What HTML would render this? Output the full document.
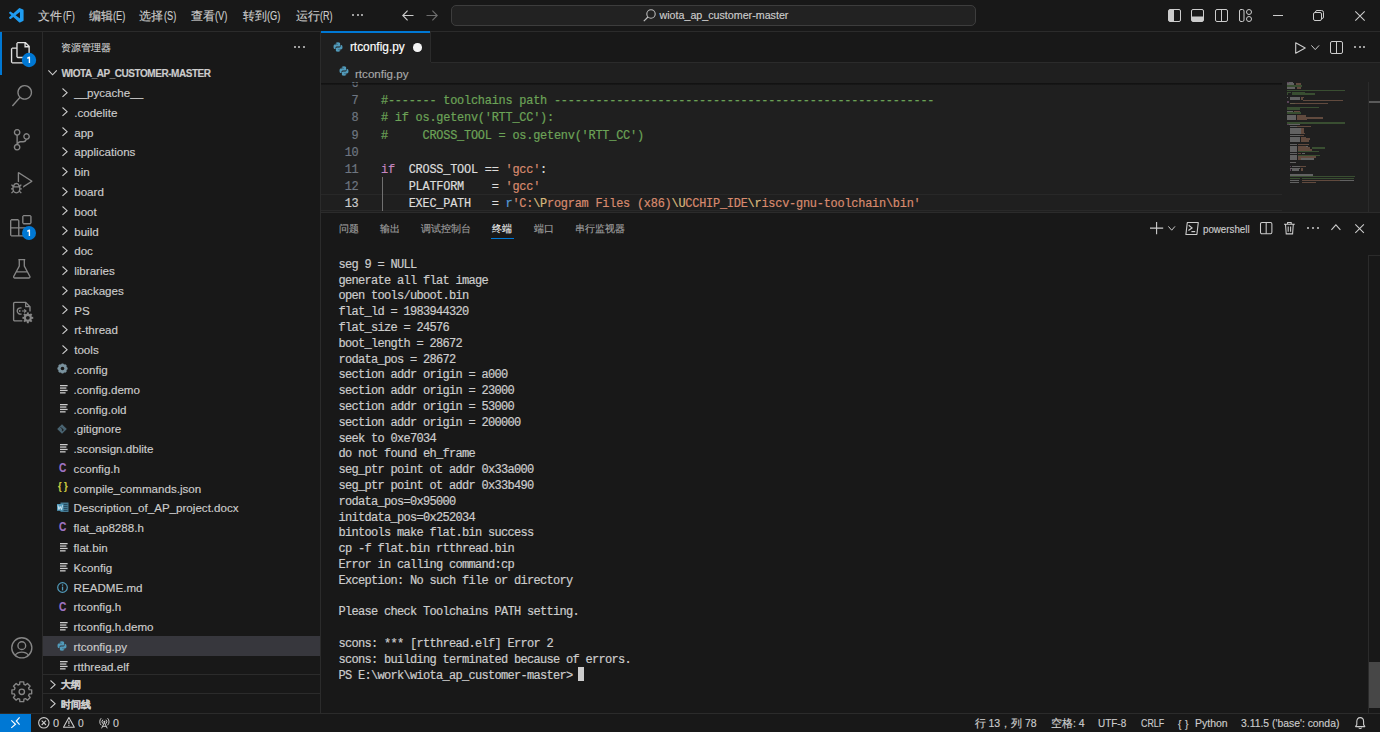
<!DOCTYPE html>
<html><head><meta charset="utf-8">
<style>
*{margin:0;padding:0;box-sizing:border-box}
html,body{width:1380px;height:732px;overflow:hidden;background:#181818;font-family:"Liberation Sans",sans-serif;color:#cccccc}
.a{position:absolute}
.tx{position:absolute;white-space:nowrap;-webkit-text-stroke:0.15px currentColor}
.mono{font-family:"Liberation Mono",monospace;-webkit-text-stroke:0.2px currentColor}
svg{overflow:visible}
</style></head><body>
<div class="a" style="left:0px;top:0px;width:1380px;height:31px;background:#181818;"></div><div class="a" style="left:0px;top:31px;width:1380px;height:1px;background:#2b2b2b;"></div><div class="a" style="left:0px;top:32px;width:42px;height:681px;background:#181818;"></div><div class="a" style="left:42px;top:32px;width:1px;height:681px;background:#2b2b2b;"></div><div class="a" style="left:43px;top:32px;width:277px;height:681px;background:#181818;"></div><div class="a" style="left:320px;top:32px;width:1px;height:681px;background:#2b2b2b;"></div><div class="a" style="left:321px;top:32px;width:1059px;height:30px;background:#181818;"></div><div class="a" style="left:321px;top:62px;width:1059px;height:150px;background:#1f1f1f;"></div><div class="a" style="left:321px;top:212px;width:1059px;height:1px;background:#2b2b2b;"></div><div class="a" style="left:321px;top:213px;width:1059px;height:500px;background:#181818;"></div><div class="a" style="left:0px;top:713px;width:1380px;height:19px;background:#181818;"></div><div class="a" style="left:0px;top:713px;width:1380px;height:1px;background:#2b2b2b;"></div><svg class="a" style="left:8.5px;top:7.8px;" width="14.6" height="14.6" viewBox="0 0 100 100"><path fill="#1f9cf0" d="M96.46 10.8L75.86.87a6.23 6.23 0 0 0-7.1 1.2L29.35 38.04 12.19 25.01a4.16 4.16 0 0 0-5.32.24l-5.5 5a4.17 4.17 0 0 0 0 6.16L16.25 50 1.37 63.58a4.17 4.17 0 0 0 0 6.16l5.5 5a4.16 4.16 0 0 0 5.32.24l17.160-13.03 39.41 35.96a6.22 6.22 0 0 0 7.1 1.2l20.6-9.92a6.25 6.25 0 0 0 3.54-5.63V16.43a6.25 6.25 0 0 0-3.54-5.63zM75.01 72.7L45.1 50l29.9-22.7v45.4z"/></svg><div class="tx" style="left:38.40px;top:10.44px;font-size:12px;line-height:12px;color:#cccccc;">文件</div><div class="tx" style="left:62.70px;top:9.70px;font-size:12.4px;line-height:12.4px;color:#cccccc;transform:scaleX(0.7389);transform-origin:0 0;">(F)</div><div class="tx" style="left:88.70px;top:10.44px;font-size:12px;line-height:12px;color:#cccccc;">编辑</div><div class="tx" style="left:113.00px;top:9.70px;font-size:12.4px;line-height:12.4px;color:#cccccc;transform:scaleX(0.7502);transform-origin:0 0;">(E)</div><div class="tx" style="left:139.40px;top:10.44px;font-size:12px;line-height:12px;color:#cccccc;">选择</div><div class="tx" style="left:163.70px;top:9.70px;font-size:12.4px;line-height:12.4px;color:#cccccc;transform:scaleX(0.7441);transform-origin:0 0;">(S)</div><div class="tx" style="left:191.00px;top:10.44px;font-size:12px;line-height:12px;color:#cccccc;">查看</div><div class="tx" style="left:215.30px;top:9.70px;font-size:12.4px;line-height:12.4px;color:#cccccc;transform:scaleX(0.7562);transform-origin:0 0;">(V)</div><div class="tx" style="left:243.00px;top:10.44px;font-size:12px;line-height:12px;color:#cccccc;">转到</div><div class="tx" style="left:267.30px;top:9.70px;font-size:12.4px;line-height:12.4px;color:#cccccc;transform:scaleX(0.7484);transform-origin:0 0;">(G)</div><div class="tx" style="left:296.00px;top:10.44px;font-size:12px;line-height:12px;color:#cccccc;">运行</div><div class="tx" style="left:320.30px;top:9.70px;font-size:12.4px;line-height:12.4px;color:#cccccc;transform:scaleX(0.7321);transform-origin:0 0;">(R)</div><div class="a" style="left:351.7px;top:13.6px;width:2px;height:2px;border-radius:1px;background:#cccccc"></div><div class="a" style="left:356.5px;top:13.6px;width:2px;height:2px;border-radius:1px;background:#cccccc"></div><div class="a" style="left:361.3px;top:13.6px;width:2px;height:2px;border-radius:1px;background:#cccccc"></div><svg class="a" style="left:402px;top:10px;" width="12" height="11" viewBox="0 0 12 11"><path d="M0.8 5.5H11.5M5.6 0.7L0.8 5.5L5.6 10.3" fill="none" stroke="#cccccc" stroke-width="1.1"/></svg><svg class="a" style="left:425.5px;top:10px;" width="12" height="11" viewBox="0 0 12 11"><path d="M11.2 5.5H0.5M6.4 0.7L11.2 5.5L6.4 10.3" fill="none" stroke="#6e6e6e" stroke-width="1.1"/></svg><div class="a" style="left:451px;top:5px;width:525px;height:21px;background:#222222;border:1px solid #3d3d3d;border-radius:5px"></div><svg class="a" style="left:643px;top:8.5px;" width="13" height="13" viewBox="0 0 13 13"><circle cx="8" cy="5" r="4.2" fill="none" stroke="#bdbdbd" stroke-width="1.1"/><path d="M5 8L0.8 12.2" stroke="#bdbdbd" stroke-width="1.2"/></svg><div class="tx" style="left:659.50px;top:10.14px;font-size:10.7px;line-height:10.7px;color:#cccccc;">wiota_ap_customer-master</div><svg class="a" style="left:1168px;top:9px;" width="13" height="13" viewBox="0 0 13 13"><rect x="0.5" y="0.5" width="12" height="12" rx="1.5" fill="none" stroke="#cccccc" stroke-width="1"/><rect x="1" y="1" width="4.5" height="11" fill="#cccccc"/><path d="M5.5 1V12" stroke="#cccccc"/></svg><svg class="a" style="left:1191px;top:9px;" width="13" height="13" viewBox="0 0 13 13"><rect x="0.5" y="0.5" width="12" height="12" rx="1.5" fill="none" stroke="#cccccc" stroke-width="1"/><rect x="1" y="8" width="11" height="4" fill="#cccccc"/><path d="M1 8H12" stroke="#cccccc"/></svg><svg class="a" style="left:1214.5px;top:9px;" width="13" height="13" viewBox="0 0 13 13"><rect x="0.5" y="0.5" width="12" height="12" rx="1.5" fill="none" stroke="#cccccc" stroke-width="1"/><path d="M6.5 1V12" stroke="#cccccc"/></svg><svg class="a" style="left:1238.5px;top:9px;" width="13" height="13" viewBox="0 0 13 13"><rect x="0.5" y="0.5" width="4.5" height="12" rx="1.5" fill="none" stroke="#cccccc" stroke-width="1"/><rect x="7.5" y="0.5" width="5" height="5" rx="2.5" fill="none" stroke="#cccccc"/><rect x="7.5" y="7.5" width="5" height="5" rx="2.5" fill="none" stroke="#cccccc"/></svg><div class="a" style="left:1272.5px;top:15px;width:10px;height:1px;background:#cccccc;"></div><svg class="a" style="left:1312.5px;top:10px;" width="11" height="11" viewBox="0 0 11 11"><rect x="0.5" y="2.5" width="8" height="8" rx="1.5" fill="none" stroke="#cccccc"/><path d="M2.5 2.5V2A1.5 1.5 0 0 1 4 0.5H8.5A2 2 0 0 1 10.5 2.5V7A1.5 1.5 0 0 1 9 8.5H8.5" fill="none" stroke="#cccccc"/></svg><svg class="a" style="left:1354.5px;top:10.5px;" width="10" height="10" viewBox="0 0 10 10"><path d="M0.3 0.3L9.7 9.7M9.7 0.3L0.3 9.7" stroke="#cccccc" stroke-width="1.05"/></svg><div class="a" style="left:0px;top:32px;width:2px;height:43px;background:#0078d4;"></div><svg class="a" style="left:10.2px;top:42.2px;" width="21.6" height="21.6" viewBox="0 0 24 24"><path fill="#e2e2e2" d="M17.5 0h-9L7 1.5V6H2.5L1 7.5v15.07L2.5 24h12.07L16 22.57V18h4.7l1.3-1.43V4.5L17.5 0zm0 2.12l2.38 2.38H17.5V2.12zm-3 20.38h-12v-15H7v9.07L8.5 18h6v4.5zm6-6h-12v-15H16V6h4.5v10.5z"/></svg><svg class="a" style="left:11.0px;top:85.2px;" width="21.6" height="21.6" viewBox="0 0 24 24"><path fill="#868686" d="M15.25 0a8.250 8.250 0 0 0-6.18 13.72L1 22.880l1.120 1 8.05-9.12A8.251 8.251 0 1 0 15.25.01V0zm0 15a6.75 6.75 0 1 1 0-13.5 6.75 6.75 0 0 1 0 13.5z"/></svg><svg class="a" style="left:10.6px;top:128.5px;" width="21.6" height="21.6" viewBox="0 0 24 24"><path fill="#868686" d="M21.007 8.222A3.738 3.738 0 0 0 15.045 5.2a3.737 3.737 0 0 0 1.156 6.583 2.988 2.988 0 0 1-2.668 1.67h-2.99a4.456 4.456 0 0 0-2.989 1.165V7.4a3.737 3.737 0 1 0-1.494 0v9.117a3.776 3.776 0 1 0 1.816.099 2.990 2.990 0 0 1 2.668-1.667h2.99a4.484 4.484 0 0 0 4.223-3.039 3.736 3.736 0 0 0 3.25-3.687zM4.565 3.738a2.242 2.242 0 1 1 4.484 0 2.242 2.242 0 0 1-4.484 0zm4.484 16.441a2.242 2.242 0 1 1-4.484 0 2.242 2.242 0 0 1 4.484 0zm8.221-9.715a2.242 2.242 0 1 1 0-4.485 2.242 2.242 0 0 1 0 4.485z"/></svg><svg class="a" style="left:10.8px;top:171.6px;" width="21.6" height="21.6" viewBox="0 0 24 24"><path fill="#868686" d="M10.94 13.5l-1.320 1.320a3.730 3.730 0 0 0-7.240 0L1.060 13.5 0 14.560l1.720 1.720-.220.220V18H0v1.5h1.5v.080c.077.489.214.966.410 1.420L0 22.940 1.060 24l1.650-1.650A4.308 4.308 0 0 0 6 24a4.310 4.310 0 0 0 3.290-1.650L10.940 24 12 22.940 10.090 21c.198-.464.336-.951.410-1.450v-.1H12V18h-1.5v-1.5l-.220-.220L12 14.560l-1.060-1.060zM6 13.5a2.250 2.250 0 0 1 2.250 2.250h-4.5A2.250 2.250 0 0 1 6 13.5zm3 6a3.330 3.330 0 0 1-3 3 3.330 3.330 0 0 1-3-3v-2.250h6v2.250zm14.760-9.9v1.260L13.5 17.370V15.6l8.5-5.370L9 2v9.460a5.070 5.070 0 0 0-1.5-.720V.630L8.640 0l15.120 9.6z"/></svg><svg class="a" style="left:10.3px;top:215.0px;" width="21.6" height="21.6" viewBox="0 0 24 24"><path fill="#868686" d="M13.5 1.5L15 0h7.5L24 1.5V9l-1.5 1.5H15L13.5 9V1.5zm1.5 0V9h7.5V1.5H15zM0 15V6l1.5-1.5H9L10.5 6v7.5H18l1.5 1.5v7.5L18 24H1.5L0 22.5V15zm9-1.5V6H1.5v7.5H9zM9 15H1.5v7.5H9V15zm1.5 7.5H18V15h-7.5v7.5z"/></svg><svg class="a" style="left:10.8px;top:258.0px;" width="21.6" height="21.6" viewBox="0 0 24 24"><path fill="none" stroke="#868686" stroke-width="1.5" d="M8.2 1.8H15.8M9.2 1.8V9L3 20.5Q2.6 22 4 22.2H20Q21.4 22 21 20.5L14.8 9V1.8M5.6 15.5H18.4"/></svg><svg class="a" style="left:11.5px;top:301.5px;" width="21.6" height="21.6" viewBox="0 0 24 24"><path fill="none" stroke="#868686" stroke-width="1.5" d="M11.5 21H3A1.2 1.2 0 0 1 1.8 19.8V1.6A1.2 1.2 0 0 1 3 0.4H15.2L20 5.2V10.5"/><path fill="none" stroke="#868686" stroke-width="1.4" d="M15.2 0.4V5.2H20"/><path fill="none" stroke="#868686" stroke-width="1.5" d="M10.6 6.9A3.4 3.4 0 1 0 10.6 13.1"/><circle cx="8.6" cy="10" r="1" fill="#868686"/><path d="M11 10H15.4M13.6 8.2L15.6 10L13.6 11.8" fill="none" stroke="#868686" stroke-width="1.3"/><circle cx="17.6" cy="17.6" r="3.3" fill="none" stroke="#868686" stroke-width="2.3"/><rect x="16.5" y="11.6" width="2.2" height="2.6" fill="#868686" transform="rotate(0 17.6 17.6)"/><rect x="16.5" y="11.6" width="2.2" height="2.6" fill="#868686" transform="rotate(45 17.6 17.6)"/><rect x="16.5" y="11.6" width="2.2" height="2.6" fill="#868686" transform="rotate(90 17.6 17.6)"/><rect x="16.5" y="11.6" width="2.2" height="2.6" fill="#868686" transform="rotate(135 17.6 17.6)"/><rect x="16.5" y="11.6" width="2.2" height="2.6" fill="#868686" transform="rotate(180 17.6 17.6)"/><rect x="16.5" y="11.6" width="2.2" height="2.6" fill="#868686" transform="rotate(225 17.6 17.6)"/><rect x="16.5" y="11.6" width="2.2" height="2.6" fill="#868686" transform="rotate(270 17.6 17.6)"/><rect x="16.5" y="11.6" width="2.2" height="2.6" fill="#868686" transform="rotate(315 17.6 17.6)"/></svg><svg class="a" style="left:10.6px;top:637.4px;" width="21.6" height="21.6" viewBox="0 0 24 24"><circle cx="12" cy="12" r="11.2" fill="none" stroke="#868686" stroke-width="1.5"/><circle cx="12" cy="9.6" r="4.3" fill="none" stroke="#868686" stroke-width="1.5"/><path d="M4.6 20.2A8.5 6.8 0 0 1 19.4 20.2" fill="none" stroke="#868686" stroke-width="1.5"/></svg><svg class="a" style="left:10.8px;top:681.0px;" width="21.6" height="21.6" viewBox="0 0 24 24"><path fill="none" stroke="#868686" stroke-width="1.5" stroke-linejoin="round" d="M20.27 9.63L22.99 9.86L22.99 14.14L20.27 14.37L19.52 16.17L21.29 18.26L18.26 21.29L16.17 19.52L14.37 20.27L14.14 22.99L9.86 22.99L9.63 20.27L7.83 19.52L5.74 21.29L2.71 18.26L4.48 16.17L3.73 14.37L1.01 14.14L1.01 9.86L3.73 9.63L4.48 7.83L2.71 5.74L5.74 2.71L7.83 4.48L9.63 3.73L9.86 1.01L14.14 1.01L14.37 3.73L16.17 4.48L18.26 2.71L21.29 5.74L19.52 7.83Z"/><circle cx="12" cy="12" r="3" fill="none" stroke="#868686" stroke-width="1.5"/></svg><svg class="a" style="left:21.0px;top:52.3px;" width="16" height="16" viewBox="0 0 16 16"><circle cx="8" cy="8" r="7.2" fill="#0078d4"/><path d="M6.3 6.4L8.4 5.1V11" fill="none" stroke="#ffffff" stroke-width="1.35" stroke-linejoin="round"/></svg><svg class="a" style="left:21.3px;top:224.6px;" width="16" height="16" viewBox="0 0 16 16"><circle cx="8" cy="8" r="7.0" fill="#0078d4"/><path d="M6.3 6.4L8.4 5.1V11" fill="none" stroke="#ffffff" stroke-width="1.35" stroke-linejoin="round"/></svg><div class="tx" style="left:61.20px;top:42.53px;font-size:10px;line-height:10px;color:#cccccc;">资源管理器</div><div class="a" style="left:293.6px;top:46.4px;width:2px;height:2px;border-radius:1px;background:#cccccc"></div><div class="a" style="left:298.1px;top:46.4px;width:2px;height:2px;border-radius:1px;background:#cccccc"></div><div class="a" style="left:302.8px;top:46.4px;width:2px;height:2px;border-radius:1px;background:#cccccc"></div><svg class="a" style="left:48px;top:70.4px;" width="9.2" height="5.4" viewBox="0 0 9.2 5.4"><path d="M0.4 0.4L4.6 4.8L8.8 0.4" fill="none" stroke="#cccccc" stroke-width="1.1"/></svg><div class="tx" style="left:61.40px;top:68.63px;font-size:10px;line-height:10px;color:#cccccc;font-weight:bold;letter-spacing:-0.46px;">WIOTA_AP_CUSTOMER-MASTER</div><div class="a" style="left:43px;top:636.04px;width:277px;height:19.78px;background:#37373d"></div><svg class="a" style="left:61.6px;top:87.7px;" width="5.8" height="9.3" viewBox="0 0 5.8 9.3"><path d="M0.5 0.5L5.1 4.65L0.5 8.8" fill="none" stroke="#cccccc" stroke-width="1.1"/></svg><div class="tx" style="left:74.20px;top:87.08px;font-size:11.6px;line-height:11.6px;color:#cccccc;">__pycache__</div><svg class="a" style="left:61.6px;top:107.48px;" width="5.8" height="9.3" viewBox="0 0 5.8 9.3"><path d="M0.5 0.5L5.1 4.65L0.5 8.8" fill="none" stroke="#cccccc" stroke-width="1.1"/></svg><div class="tx" style="left:74.20px;top:106.86px;font-size:11.6px;line-height:11.6px;color:#cccccc;">.codelite</div><svg class="a" style="left:61.6px;top:127.25999999999999px;" width="5.8" height="9.3" viewBox="0 0 5.8 9.3"><path d="M0.5 0.5L5.1 4.65L0.5 8.8" fill="none" stroke="#cccccc" stroke-width="1.1"/></svg><div class="tx" style="left:74.20px;top:126.64px;font-size:11.6px;line-height:11.6px;color:#cccccc;">app</div><svg class="a" style="left:61.6px;top:147.04px;" width="5.8" height="9.3" viewBox="0 0 5.8 9.3"><path d="M0.5 0.5L5.1 4.65L0.5 8.8" fill="none" stroke="#cccccc" stroke-width="1.1"/></svg><div class="tx" style="left:74.20px;top:146.42px;font-size:11.6px;line-height:11.6px;color:#cccccc;">applications</div><svg class="a" style="left:61.6px;top:166.82px;" width="5.8" height="9.3" viewBox="0 0 5.8 9.3"><path d="M0.5 0.5L5.1 4.65L0.5 8.8" fill="none" stroke="#cccccc" stroke-width="1.1"/></svg><div class="tx" style="left:74.20px;top:166.20px;font-size:11.6px;line-height:11.6px;color:#cccccc;">bin</div><svg class="a" style="left:61.6px;top:186.6px;" width="5.8" height="9.3" viewBox="0 0 5.8 9.3"><path d="M0.5 0.5L5.1 4.65L0.5 8.8" fill="none" stroke="#cccccc" stroke-width="1.1"/></svg><div class="tx" style="left:74.20px;top:185.98px;font-size:11.6px;line-height:11.6px;color:#cccccc;">board</div><svg class="a" style="left:61.6px;top:206.38px;" width="5.8" height="9.3" viewBox="0 0 5.8 9.3"><path d="M0.5 0.5L5.1 4.65L0.5 8.8" fill="none" stroke="#cccccc" stroke-width="1.1"/></svg><div class="tx" style="left:74.20px;top:205.76px;font-size:11.6px;line-height:11.6px;color:#cccccc;">boot</div><svg class="a" style="left:61.6px;top:226.16px;" width="5.8" height="9.3" viewBox="0 0 5.8 9.3"><path d="M0.5 0.5L5.1 4.65L0.5 8.8" fill="none" stroke="#cccccc" stroke-width="1.1"/></svg><div class="tx" style="left:74.20px;top:225.54px;font-size:11.6px;line-height:11.6px;color:#cccccc;">build</div><svg class="a" style="left:61.6px;top:245.94px;" width="5.8" height="9.3" viewBox="0 0 5.8 9.3"><path d="M0.5 0.5L5.1 4.65L0.5 8.8" fill="none" stroke="#cccccc" stroke-width="1.1"/></svg><div class="tx" style="left:74.20px;top:245.32px;font-size:11.6px;line-height:11.6px;color:#cccccc;">doc</div><svg class="a" style="left:61.6px;top:265.72px;" width="5.8" height="9.3" viewBox="0 0 5.8 9.3"><path d="M0.5 0.5L5.1 4.65L0.5 8.8" fill="none" stroke="#cccccc" stroke-width="1.1"/></svg><div class="tx" style="left:74.20px;top:265.10px;font-size:11.6px;line-height:11.6px;color:#cccccc;">libraries</div><svg class="a" style="left:61.6px;top:285.50000000000006px;" width="5.8" height="9.3" viewBox="0 0 5.8 9.3"><path d="M0.5 0.5L5.1 4.65L0.5 8.8" fill="none" stroke="#cccccc" stroke-width="1.1"/></svg><div class="tx" style="left:74.20px;top:284.88px;font-size:11.6px;line-height:11.6px;color:#cccccc;">packages</div><svg class="a" style="left:61.6px;top:305.28000000000003px;" width="5.8" height="9.3" viewBox="0 0 5.8 9.3"><path d="M0.5 0.5L5.1 4.65L0.5 8.8" fill="none" stroke="#cccccc" stroke-width="1.1"/></svg><div class="tx" style="left:74.20px;top:304.66px;font-size:11.6px;line-height:11.6px;color:#cccccc;">PS</div><svg class="a" style="left:61.6px;top:325.06px;" width="5.8" height="9.3" viewBox="0 0 5.8 9.3"><path d="M0.5 0.5L5.1 4.65L0.5 8.8" fill="none" stroke="#cccccc" stroke-width="1.1"/></svg><div class="tx" style="left:74.20px;top:324.44px;font-size:11.6px;line-height:11.6px;color:#cccccc;">rt-thread</div><svg class="a" style="left:61.6px;top:344.84px;" width="5.8" height="9.3" viewBox="0 0 5.8 9.3"><path d="M0.5 0.5L5.1 4.65L0.5 8.8" fill="none" stroke="#cccccc" stroke-width="1.1"/></svg><div class="tx" style="left:74.20px;top:344.22px;font-size:11.6px;line-height:11.6px;color:#cccccc;">tools</div><svg class="a" style="left:56.9px;top:363.02000000000004px;" width="11" height="11" viewBox="0 0 11 11"><circle cx="5.5" cy="5.5" r="3.4" fill="none" stroke="#7a929e" stroke-width="2.4"/><path d="M5.5 0.4V10.6M0.4 5.5H10.6M1.9 1.9L9.1 9.1M9.1 1.9L1.9 9.1" stroke="#7a929e" stroke-width="1.9"/><circle cx="5.5" cy="5.5" r="1.8" fill="#181818"/></svg><div class="tx" style="left:73.60px;top:364.00px;font-size:11.6px;line-height:11.6px;color:#cccccc;">.config</div><svg class="a" style="left:60.4px;top:384.5px;" width="8" height="8.6" viewBox="0 0 8 8.6"><rect x="0" y="0" width="7.6" height="1.3" fill="#cccccc"/><rect x="0" y="2.4" width="6.4" height="1.3" fill="#cccccc"/><rect x="0" y="4.8" width="7.6" height="1.3" fill="#cccccc"/><rect x="0" y="7.2" width="5.6" height="1.3" fill="#cccccc"/></svg><div class="tx" style="left:73.60px;top:383.78px;font-size:11.6px;line-height:11.6px;color:#cccccc;">.config.demo</div><svg class="a" style="left:60.4px;top:404.28px;" width="8" height="8.6" viewBox="0 0 8 8.6"><rect x="0" y="0" width="7.6" height="1.3" fill="#cccccc"/><rect x="0" y="2.4" width="6.4" height="1.3" fill="#cccccc"/><rect x="0" y="4.8" width="7.6" height="1.3" fill="#cccccc"/><rect x="0" y="7.2" width="5.6" height="1.3" fill="#cccccc"/></svg><div class="tx" style="left:73.60px;top:403.56px;font-size:11.6px;line-height:11.6px;color:#cccccc;">.config.old</div><svg class="a" style="left:57.1px;top:423.55999999999995px;" width="10" height="10" viewBox="0 0 10 10"><path d="M5 0.2L9.8 5L5 9.8L0.2 5Z" fill="#4a6472"/><path d="M3.6 3.2L5.4 5V7.2M5.4 5L6.8 6.2" stroke="#181818" stroke-width="0.9" fill="none"/></svg><div class="tx" style="left:73.60px;top:423.34px;font-size:11.6px;line-height:11.6px;color:#cccccc;">.gitignore</div><svg class="a" style="left:60.4px;top:443.84000000000003px;" width="8" height="8.6" viewBox="0 0 8 8.6"><rect x="0" y="0" width="7.6" height="1.3" fill="#cccccc"/><rect x="0" y="2.4" width="6.4" height="1.3" fill="#cccccc"/><rect x="0" y="4.8" width="7.6" height="1.3" fill="#cccccc"/><rect x="0" y="7.2" width="5.6" height="1.3" fill="#cccccc"/></svg><div class="tx" style="left:73.60px;top:443.12px;font-size:11.6px;line-height:11.6px;color:#cccccc;">.sconsign.dblite</div><div class="tx" style="left:59.00px;top:462.06px;font-size:12px;line-height:12px;color:#a074c4;font-weight:bold;transform:scaleX(0.8426);transform-origin:0 0;">C</div><div class="tx" style="left:73.60px;top:462.90px;font-size:11.6px;line-height:11.6px;color:#cccccc;">cconfig.h</div><div class="tx" style="left:57.80px;top:480.48px;font-size:11.6px;line-height:11.6px;color:#cbcb41;font-weight:bold;transform:scaleX(0.7978);transform-origin:0 0;">{</div><div class="tx" style="left:64.00px;top:480.48px;font-size:11.6px;line-height:11.6px;color:#cbcb41;font-weight:bold;transform:scaleX(0.7978);transform-origin:0 0;">}</div><div class="tx" style="left:73.60px;top:482.68px;font-size:11.6px;line-height:11.6px;color:#cccccc;">compile_commands.json</div><svg class="a" style="left:56.5px;top:502.17999999999995px;" width="12" height="10.5" viewBox="0 0 12 10.5"><rect x="3.5" y="0.5" width="8" height="9.5" fill="#519aba" opacity="0.75"/><path d="M5.2 2.5H10.5M5.2 4.5H10.5M5.2 6.5H10.5M5.2 8.5H10.5" stroke="#1f3f55" stroke-width="0.8"/><rect x="0" y="2" width="6.5" height="6.8" fill="#519aba"/><path d="M1 3.3L1.9 7.5L3.2 4.5L4.5 7.5L5.5 3.3" stroke="#e8f4fb" stroke-width="0.8" fill="none"/></svg><div class="tx" style="left:73.60px;top:502.46px;font-size:11.6px;line-height:11.6px;color:#cccccc;">Description_of_AP_project.docx</div><div class="tx" style="left:59.00px;top:521.40px;font-size:12px;line-height:12px;color:#a074c4;font-weight:bold;transform:scaleX(0.8426);transform-origin:0 0;">C</div><div class="tx" style="left:73.60px;top:522.24px;font-size:11.6px;line-height:11.6px;color:#cccccc;">flat_ap8288.h</div><svg class="a" style="left:60.4px;top:542.7400000000001px;" width="8" height="8.6" viewBox="0 0 8 8.6"><rect x="0" y="0" width="7.6" height="1.3" fill="#cccccc"/><rect x="0" y="2.4" width="6.4" height="1.3" fill="#cccccc"/><rect x="0" y="4.8" width="7.6" height="1.3" fill="#cccccc"/><rect x="0" y="7.2" width="5.6" height="1.3" fill="#cccccc"/></svg><div class="tx" style="left:73.60px;top:542.02px;font-size:11.6px;line-height:11.6px;color:#cccccc;">flat.bin</div><svg class="a" style="left:60.4px;top:562.5200000000001px;" width="8" height="8.6" viewBox="0 0 8 8.6"><rect x="0" y="0" width="7.6" height="1.3" fill="#cccccc"/><rect x="0" y="2.4" width="6.4" height="1.3" fill="#cccccc"/><rect x="0" y="4.8" width="7.6" height="1.3" fill="#cccccc"/><rect x="0" y="7.2" width="5.6" height="1.3" fill="#cccccc"/></svg><div class="tx" style="left:73.60px;top:561.80px;font-size:11.6px;line-height:11.6px;color:#cccccc;">Kconfig</div><svg class="a" style="left:57.0px;top:581.6px;" width="11" height="11" viewBox="0 0 11 11"><circle cx="5.5" cy="5.5" r="4.8" fill="none" stroke="#519aba" stroke-width="1.2"/><rect x="4.9" y="4.6" width="1.3" height="3.8" fill="#519aba"/><rect x="4.9" y="2.4" width="1.3" height="1.3" fill="#519aba"/></svg><div class="tx" style="left:73.60px;top:581.58px;font-size:11.6px;line-height:11.6px;color:#cccccc;">README.md</div><div class="tx" style="left:59.00px;top:600.52px;font-size:12px;line-height:12px;color:#a074c4;font-weight:bold;transform:scaleX(0.8426);transform-origin:0 0;">C</div><div class="tx" style="left:73.60px;top:601.36px;font-size:11.6px;line-height:11.6px;color:#cccccc;">rtconfig.h</div><svg class="a" style="left:60.4px;top:621.8600000000001px;" width="8" height="8.6" viewBox="0 0 8 8.6"><rect x="0" y="0" width="7.6" height="1.3" fill="#cccccc"/><rect x="0" y="2.4" width="6.4" height="1.3" fill="#cccccc"/><rect x="0" y="4.8" width="7.6" height="1.3" fill="#cccccc"/><rect x="0" y="7.2" width="5.6" height="1.3" fill="#cccccc"/></svg><div class="tx" style="left:73.60px;top:621.14px;font-size:11.6px;line-height:11.6px;color:#cccccc;">rtconfig.h.demo</div><svg class="a" style="left:57.2px;top:640.94px;" width="10" height="10" viewBox="0 0 16 16"><path fill="#519aba" d="M7.9 0.3C4.3 0.3 4.5 1.9 4.5 1.9V3.6H8V4.1H3.1S0.8 3.8 0.8 7.5 2.8 11 2.8 11H4V9.3S3.9 7.3 6 7.3H9.5S11.4 7.3 11.4 5.5V2.4S11.7 0.3 7.9 0.3ZM6 1.4A.6.6 0 1 1 6 2.6 .6.6 0 1 1 6 1.4Z"/><path fill="#519aba" d="M8.1 15.7C11.7 15.7 11.5 14.1 11.5 14.1V12.4H8V11.9H12.9S15.2 12.2 15.2 8.5 13.2 5 13.2 5H12V6.7S12.1 8.7 10 8.7H6.5S4.6 8.7 4.6 10.5V13.6S4.3 15.7 8.1 15.7ZM10 14.6A.6.6 0 1 1 10 13.4 .6.6 0 1 1 10 14.6Z"/></svg><div class="tx" style="left:73.60px;top:640.92px;font-size:11.6px;line-height:11.6px;color:#cccccc;">rtconfig.py</div><svg class="a" style="left:60.4px;top:661.4200000000001px;" width="8" height="8.6" viewBox="0 0 8 8.6"><rect x="0" y="0" width="7.6" height="1.3" fill="#cccccc"/><rect x="0" y="2.4" width="6.4" height="1.3" fill="#cccccc"/><rect x="0" y="4.8" width="7.6" height="1.3" fill="#cccccc"/><rect x="0" y="7.2" width="5.6" height="1.3" fill="#cccccc"/></svg><div class="tx" style="left:73.60px;top:660.70px;font-size:11.6px;line-height:11.6px;color:#cccccc;">rtthread.elf</div><div class="a" style="left:43px;top:674px;width:277px;height:1px;background:#2b2b2b;"></div><div class="a" style="left:43px;top:693px;width:277px;height:1px;background:#2b2b2b;"></div><svg class="a" style="left:49.6px;top:679.6px;" width="5.8" height="9.3" viewBox="0 0 5.8 9.3"><path d="M0.5 0.5L5.1 4.65L0.5 8.8" fill="none" stroke="#cccccc" stroke-width="1.1"/></svg><div class="tx" style="left:61.00px;top:680.03px;font-size:10px;line-height:10px;color:#cccccc;font-weight:bold;">大纲</div><svg class="a" style="left:49.6px;top:699.0px;" width="5.8" height="9.3" viewBox="0 0 5.8 9.3"><path d="M0.5 0.5L5.1 4.65L0.5 8.8" fill="none" stroke="#cccccc" stroke-width="1.1"/></svg><div class="tx" style="left:61.00px;top:699.53px;font-size:10px;line-height:10px;color:#cccccc;font-weight:bold;">时间线</div><div class="a" style="left:321px;top:32px;width:109px;height:30px;background:#1f1f1f;"></div><div class="a" style="left:321px;top:31px;width:109px;height:2px;background:#0078d4;"></div><div class="a" style="left:430px;top:32px;width:1px;height:30px;background:#2b2b2b;"></div><div class="a" style="left:431px;top:62px;width:949px;height:1px;background:#2b2b2b;"></div><svg class="a" style="left:333.4px;top:41.9px;" width="10" height="10" viewBox="0 0 16 16"><path fill="#519aba" d="M7.9 0.3C4.3 0.3 4.5 1.9 4.5 1.9V3.6H8V4.1H3.1S0.8 3.8 0.8 7.5 2.8 11 2.8 11H4V9.3S3.9 7.3 6 7.3H9.5S11.4 7.3 11.4 5.5V2.4S11.7 0.3 7.9 0.3ZM6 1.4A.6.6 0 1 1 6 2.6 .6.6 0 1 1 6 1.4Z"/><path fill="#519aba" d="M8.1 15.7C11.7 15.7 11.5 14.1 11.5 14.1V12.4H8V11.9H12.9S15.2 12.2 15.2 8.5 13.2 5 13.2 5H12V6.7S12.1 8.7 10 8.7H6.5S4.6 8.7 4.6 10.5V13.6S4.3 15.7 8.1 15.7ZM10 14.6A.6.6 0 1 1 10 13.4 .6.6 0 1 1 10 14.6Z"/></svg><div class="tx" style="left:349.90px;top:41.93px;font-size:11.9px;line-height:11.9px;color:#ffffff;">rtconfig.py</div><div class="a" style="left:413.0px;top:43.0px;width:8.6px;height:8.6px;border-radius:50%;background:#f4f4f4"></div><svg class="a" style="left:1295.3px;top:41.9px;" width="11" height="12" viewBox="0 0 11 12"><path d="M0.7 0.8L10.2 6L0.7 11.2Z" fill="none" stroke="#cccccc" stroke-width="1.1" stroke-linejoin="round"/></svg><svg class="a" style="left:1311.3px;top:44.9px;" width="8.5" height="5.5" viewBox="0 0 8.5 5.5"><path d="M0.4 0.4L4.25 4.6L8.1 0.4" fill="none" stroke="#cccccc" stroke-width="1"/></svg><svg class="a" style="left:1330px;top:40.8px;" width="13" height="13" viewBox="0 0 13 13"><rect x="0.5" y="0.5" width="12" height="12" rx="1.5" fill="none" stroke="#cccccc"/><path d="M6.5 1V12" stroke="#cccccc"/></svg><div class="a" style="left:1354.0px;top:46.4px;width:2px;height:2px;border-radius:1px;background:#cccccc"></div><div class="a" style="left:1358.5px;top:46.4px;width:2px;height:2px;border-radius:1px;background:#cccccc"></div><div class="a" style="left:1363.0px;top:46.4px;width:2px;height:2px;border-radius:1px;background:#cccccc"></div><svg class="a" style="left:338.8px;top:66.2px;" width="10" height="10" viewBox="0 0 16 16"><path fill="#519aba" d="M7.9 0.3C4.3 0.3 4.5 1.9 4.5 1.9V3.6H8V4.1H3.1S0.8 3.8 0.8 7.5 2.8 11 2.8 11H4V9.3S3.9 7.3 6 7.3H9.5S11.4 7.3 11.4 5.5V2.4S11.7 0.3 7.9 0.3ZM6 1.4A.6.6 0 1 1 6 2.6 .6.6 0 1 1 6 1.4Z"/><path fill="#519aba" d="M8.1 15.7C11.7 15.7 11.5 14.1 11.5 14.1V12.4H8V11.9H12.9S15.2 12.2 15.2 8.5 13.2 5 13.2 5H12V6.7S12.1 8.7 10 8.7H6.5S4.6 8.7 4.6 10.5V13.6S4.3 15.7 8.1 15.7ZM10 14.6A.6.6 0 1 1 10 13.4 .6.6 0 1 1 10 14.6Z"/></svg><div class="tx" style="left:355.00px;top:68.18px;font-size:11.6px;line-height:11.6px;color:#a9a9a9;">rtconfig.py</div><div class="a" style="left:321px;top:194px;width:961px;height:1px;background:#282828;"></div><div class="a" style="left:321px;top:210px;width:961px;height:1px;background:#282828;"></div><div class="a" style="left:0;top:82px;width:1380px;height:130px;overflow:hidden"><div class="a" style="left:0;top:-82px;width:1380px;height:300px"><div class="tx mono" style="left:351.58px;top:79.31px;font-size:11.9px;line-height:11.9px;color:#6e7681;letter-spacing:-0.220px;">6</div><div class="tx mono" style="left:351.58px;top:96.38px;font-size:11.9px;line-height:11.9px;color:#6e7681;letter-spacing:-0.220px;">7</div><div class="tx mono" style="left:351.58px;top:113.45px;font-size:11.9px;line-height:11.9px;color:#6e7681;letter-spacing:-0.220px;">8</div><div class="tx mono" style="left:351.58px;top:130.52px;font-size:11.9px;line-height:11.9px;color:#6e7681;letter-spacing:-0.220px;">9</div><div class="tx mono" style="left:344.66px;top:147.59px;font-size:11.9px;line-height:11.9px;color:#6e7681;letter-spacing:-0.220px;">10</div><div class="tx mono" style="left:344.66px;top:164.66px;font-size:11.9px;line-height:11.9px;color:#6e7681;letter-spacing:-0.220px;">11</div><div class="tx mono" style="left:344.66px;top:181.73px;font-size:11.9px;line-height:11.9px;color:#6e7681;letter-spacing:-0.220px;">12</div><div class="tx mono" style="left:344.66px;top:198.80px;font-size:11.9px;line-height:11.9px;color:#cccccc;letter-spacing:-0.220px;">13</div><div class="a" style="left:381.5px;top:176.95px;width:1px;height:34.14px;background:#707070;"></div><div class="tx mono" style="left:381.0px;top:96.38px;font-size:11.9px;line-height:11.9px;letter-spacing:-0.220px;white-space:pre"><span style="color:#6ca357">#------- toolchains path -------------------------------------------------------</span></div><div class="tx mono" style="left:381.0px;top:113.45px;font-size:11.9px;line-height:11.9px;letter-spacing:-0.220px;white-space:pre"><span style="color:#6ca357"># if os.getenv('RTT_CC'):</span></div><div class="tx mono" style="left:381.0px;top:130.52px;font-size:11.9px;line-height:11.9px;letter-spacing:-0.220px;white-space:pre"><span style="color:#6ca357">#     CROSS_TOOL = os.getenv('RTT_CC')</span></div><div class="tx mono" style="left:381.0px;top:164.66px;font-size:11.9px;line-height:11.9px;letter-spacing:-0.220px;white-space:pre"><span style="color:#c586c0">if</span><span style="color:#dcdcdc">  CROSS_TOOL == </span><span style="color:#d88a6e">'gcc'</span><span style="color:#dcdcdc">:</span></div><div class="tx mono" style="left:381.0px;top:181.73px;font-size:11.9px;line-height:11.9px;letter-spacing:-0.220px;white-space:pre"><span style="color:#dcdcdc">    PLATFORM    = </span><span style="color:#d88a6e">'gcc'</span></div><div class="tx mono" style="left:381.0px;top:198.80px;font-size:11.9px;line-height:11.9px;letter-spacing:-0.220px;white-space:pre"><span style="color:#dcdcdc">    EXEC_PATH   = </span><span style="color:#569cd6">r</span><span style="color:#d88a6e">'C:</span><span style="color:#d7ba7d">\P</span><span style="color:#d88a6e">rogram Files (x86)</span><span style="color:#d7ba7d">\U</span><span style="color:#d88a6e">CCHIP_IDE</span><span style="color:#d7ba7d">\r</span><span style="color:#d88a6e">iscv-gnu-toolchain\bin'</span></div></div></div><div class="a" style="left:321px;top:83px;width:961px;height:2px;background:linear-gradient(#101010,rgba(0,0,0,0.2))"></div><div class="a" style="left:1368px;top:82px;width:1px;height:130px;background:#2b2b2b;"></div><div class="a" style="left:1369px;top:101px;width:11px;height:2px;background:#5a5a5a;"></div><div class="a" style="left:0;top:0;opacity:0.62"><div class="a" style="left:1287px;top:81.6px;width:2.0px;height:1.4px;background:#7e5a7c"></div><div class="a" style="left:1289px;top:81.6px;width:4.0px;height:1.4px;background:#8c8c8c"></div><div class="a" style="left:1287px;top:83.4px;width:7.0px;height:1.4px;background:#8c8c8c"></div><div class="a" style="left:1296px;top:83.4px;width:5.0px;height:1.4px;background:#8a6552"></div><div class="a" style="left:1287px;top:85.4px;width:14.5px;height:1.4px;background:#4a6b3c"></div><div class="a" style="left:1287px;top:87.4px;width:7.5px;height:1.4px;background:#8c8c8c"></div><div class="a" style="left:1297px;top:87.4px;width:3.5px;height:1.4px;background:#8a6552"></div><div class="a" style="left:1287px;top:90.0px;width:17.5px;height:1.4px;background:#4a6b3c"></div><div class="a" style="left:1305.4px;top:90.0px;width:39.4px;height:1.4px;background:#4a6b3c"></div><div class="a" style="left:1287px;top:91.8px;width:4.0px;height:1.4px;background:#4a6b3c"></div><div class="a" style="left:1292px;top:91.8px;width:12.5px;height:1.4px;background:#4a6b3c"></div><div class="a" style="left:1287px;top:93.4px;width:1.0px;height:1.4px;background:#4a6b3c"></div><div class="a" style="left:1291.9px;top:93.4px;width:22.8px;height:1.4px;background:#4a6b3c"></div><div class="a" style="left:1287px;top:96.6px;width:1.0px;height:1.4px;background:#8c8c8c"></div><div class="a" style="left:1289.5px;top:96.6px;width:10.5px;height:1.4px;background:#8c8c8c"></div><div class="a" style="left:1300.7px;top:96.6px;width:3.8px;height:1.4px;background:#8a6552"></div><div class="a" style="left:1289.7px;top:98.4px;width:10.3px;height:1.4px;background:#8c8c8c"></div><div class="a" style="left:1300.5px;top:98.4px;width:2.5px;height:1.4px;background:#8a6552"></div><div class="a" style="left:1302.9px;top:99.8px;width:40.1px;height:1.4px;background:#8a6552"></div><div class="a" style="left:1287px;top:101.4px;width:2.3px;height:1.4px;background:#7e5a7c"></div><div class="a" style="left:1289.7px;top:103.0px;width:5.3px;height:1.4px;background:#8f8060"></div><div class="a" style="left:1295.2px;top:103.0px;width:33.0px;height:1.4px;background:#8a6552"></div><div class="a" style="left:1287px;top:106.8px;width:31.5px;height:1.4px;background:#4a6b3c"></div><div class="a" style="left:1287px;top:108.4px;width:13.0px;height:1.4px;background:#4a6b3c"></div><div class="a" style="left:1287px;top:110.8px;width:5.7px;height:1.4px;background:#8c8c8c"></div><div class="a" style="left:1293.5px;top:110.8px;width:6.8px;height:1.4px;background:#8a6552"></div><div class="a" style="left:1287px;top:112.4px;width:13.7px;height:1.4px;background:#4a6b3c"></div><div class="a" style="left:1287px;top:115.4px;width:8.7px;height:1.4px;background:#8c8c8c"></div><div class="a" style="left:1296.5px;top:115.4px;width:9.5px;height:1.4px;background:#8a6552"></div><div class="a" style="left:1287px;top:117.2px;width:9.0px;height:1.4px;background:#8c8c8c"></div><div class="a" style="left:1297px;top:117.2px;width:26.0px;height:1.4px;background:#8a6552"></div><div class="a" style="left:1287px;top:119.0px;width:9.0px;height:1.4px;background:#8c8c8c"></div><div class="a" style="left:1297px;top:119.0px;width:9.5px;height:1.4px;background:#8a6552"></div><div class="a" style="left:1287px;top:122.4px;width:15.0px;height:1.4px;background:#4a6b3c"></div><div class="a" style="left:1302px;top:122.4px;width:42.8px;height:1.4px;background:#4a6b3c"></div><div class="a" style="left:1287px;top:124.0px;width:1.5px;height:1.4px;background:#7e5a7c"></div><div class="a" style="left:1288.5px;top:124.0px;width:11.5px;height:1.4px;background:#8c8c8c"></div><div class="a" style="left:1289.7px;top:125.8px;width:7.3px;height:1.4px;background:#8c8c8c"></div><div class="a" style="left:1297px;top:125.8px;width:14.0px;height:1.4px;background:#8a6552"></div><div class="a" style="left:1289.7px;top:127.6px;width:11.3px;height:1.4px;background:#8c8c8c"></div><div class="a" style="left:1301px;top:127.6px;width:2.7px;height:1.4px;background:#8a6552"></div><div class="a" style="left:1289.7px;top:129.4px;width:11.3px;height:1.4px;background:#8c8c8c"></div><div class="a" style="left:1301px;top:129.4px;width:2.7px;height:1.4px;background:#8a6552"></div><div class="a" style="left:1289.7px;top:131.2px;width:11.3px;height:1.4px;background:#8c8c8c"></div><div class="a" style="left:1301px;top:131.2px;width:2.7px;height:1.4px;background:#8a6552"></div><div class="a" style="left:1289.7px;top:133.0px;width:11.3px;height:1.4px;background:#8c8c8c"></div><div class="a" style="left:1301px;top:133.0px;width:4.0px;height:1.4px;background:#8a6552"></div><div class="a" style="left:1290.4px;top:134.8px;width:9.3px;height:1.4px;background:#8c8c8c"></div><div class="a" style="left:1299.7px;top:134.8px;width:4.3px;height:1.4px;background:#8a6552"></div><div class="a" style="left:1290.4px;top:136.6px;width:9.3px;height:1.4px;background:#8c8c8c"></div><div class="a" style="left:1300.5px;top:136.6px;width:5.5px;height:1.4px;background:#8a6552"></div><div class="a" style="left:1290.4px;top:138.4px;width:9.3px;height:1.4px;background:#8c8c8c"></div><div class="a" style="left:1300.5px;top:138.4px;width:9.5px;height:1.4px;background:#8a6552"></div><div class="a" style="left:1290.4px;top:140.2px;width:9.3px;height:1.4px;background:#8c8c8c"></div><div class="a" style="left:1300.5px;top:140.2px;width:8.5px;height:1.4px;background:#8a6552"></div><div class="a" style="left:1290.4px;top:143.8px;width:7.1px;height:1.4px;background:#8c8c8c"></div><div class="a" style="left:1298px;top:143.8px;width:11.0px;height:1.4px;background:#8a6552"></div><div class="a" style="left:1290.4px;top:145.6px;width:7.1px;height:1.4px;background:#8c8c8c"></div><div class="a" style="left:1298px;top:145.6px;width:8.0px;height:1.4px;background:#8a6552"></div><div class="a" style="left:1306px;top:145.6px;width:2.0px;height:1.4px;background:#8c8c8c"></div><div class="a" style="left:1290.4px;top:147.4px;width:7.1px;height:1.4px;background:#8c8c8c"></div><div class="a" style="left:1298px;top:147.4px;width:12.0px;height:1.4px;background:#8a6552"></div><div class="a" style="left:1312px;top:147.4px;width:12.8px;height:1.4px;background:#4a6b3c"></div><div class="a" style="left:1290.4px;top:149.2px;width:7.1px;height:1.4px;background:#8c8c8c"></div><div class="a" style="left:1298px;top:149.2px;width:14.0px;height:1.4px;background:#8a6552"></div><div class="a" style="left:1290.4px;top:151.0px;width:7.1px;height:1.4px;background:#8c8c8c"></div><div class="a" style="left:1298px;top:151.0px;width:21.0px;height:1.4px;background:#4a6b3c"></div><div class="a" style="left:1290.4px;top:152.8px;width:7.1px;height:1.4px;background:#8c8c8c"></div><div class="a" style="left:1298px;top:152.8px;width:3.0px;height:1.4px;background:#8a6552"></div><div class="a" style="left:1302px;top:152.8px;width:3.0px;height:1.4px;background:#8c8c8c"></div><div class="a" style="left:1290.4px;top:154.6px;width:7.1px;height:1.4px;background:#8c8c8c"></div><div class="a" style="left:1298px;top:154.6px;width:22.0px;height:1.4px;background:#4a6b3c"></div><div class="a" style="left:1290.4px;top:156.4px;width:7.1px;height:1.4px;background:#8c8c8c"></div><div class="a" style="left:1298px;top:156.4px;width:18.0px;height:1.4px;background:#8a6552"></div><div class="a" style="left:1290.4px;top:158.2px;width:7.1px;height:1.4px;background:#8c8c8c"></div><div class="a" style="left:1298px;top:158.2px;width:2.5px;height:1.4px;background:#8a6552"></div><div class="a" style="left:1301px;top:158.2px;width:13.0px;height:1.4px;background:#8c8c8c"></div><div class="a" style="left:1290.4px;top:161.6px;width:6.0px;height:1.4px;background:#8c8c8c"></div><div class="a" style="left:1290.4px;top:165.8px;width:1.1px;height:1.4px;background:#7e5a7c"></div><div class="a" style="left:1291.5px;top:165.8px;width:8.2px;height:1.4px;background:#8c8c8c"></div><div class="a" style="left:1299.7px;top:165.8px;width:6.0px;height:1.4px;background:#8a6552"></div><div class="a" style="left:1290.4px;top:167.6px;width:9.3px;height:1.4px;background:#8c8c8c"></div><div class="a" style="left:1300.7px;top:167.6px;width:2.3px;height:1.4px;background:#8a6552"></div><div class="a" style="left:1290.4px;top:169.4px;width:1.1px;height:1.4px;background:#7e5a7c"></div><div class="a" style="left:1291.5px;top:169.4px;width:7.5px;height:1.4px;background:#8c8c8c"></div><div class="a" style="left:1300.7px;top:169.4px;width:2.3px;height:1.4px;background:#8a6552"></div><div class="a" style="left:1290.4px;top:174.2px;width:22.4px;height:1.4px;background:#8c8c8c"></div><div class="a" style="left:1290.4px;top:176.0px;width:65.0px;height:1.4px;background:#4a6b3c"></div><div class="a" style="left:1290.4px;top:177.8px;width:9.6px;height:1.4px;background:#4a6b3c"></div><div class="a" style="left:1302px;top:177.8px;width:52.0px;height:1.4px;background:#4a6b3c"></div><div class="a" style="left:1290.4px;top:179.6px;width:8.2px;height:1.4px;background:#8c8c8c"></div><div class="a" style="left:1302px;top:179.6px;width:38.0px;height:1.4px;background:#8a6552"></div><div class="a" style="left:1340px;top:179.6px;width:14.3px;height:1.4px;background:#8c8c8c"></div><div class="a" style="left:1290.4px;top:181.8px;width:8.2px;height:1.4px;background:#8c8c8c"></div><div class="a" style="left:1302px;top:181.8px;width:14.0px;height:1.4px;background:#8a6552"></div></div><div class="tx" style="left:338.50px;top:223.94px;font-size:10px;line-height:10px;color:#9d9d9d;">问题</div><div class="tx" style="left:380.00px;top:223.94px;font-size:10px;line-height:10px;color:#9d9d9d;">输出</div><div class="tx" style="left:421.40px;top:223.94px;font-size:10px;line-height:10px;color:#9d9d9d;">调试控制台</div><div class="tx" style="left:492.00px;top:223.94px;font-size:10px;line-height:10px;color:#e7e7e7;">终端</div><div class="tx" style="left:533.60px;top:223.94px;font-size:10px;line-height:10px;color:#9d9d9d;">端口</div><div class="tx" style="left:575.00px;top:223.94px;font-size:10px;line-height:10px;color:#9d9d9d;">串行监视器</div><div class="a" style="left:491px;top:238px;width:23px;height:1px;background:#0078d4;"></div><svg class="a" style="left:1149.7px;top:222.2px;" width="13.2" height="12.2" viewBox="0 0 13.2 12.2"><path d="M6.6 0V12.2M0 6.1H13.2" stroke="#cccccc" stroke-width="1.1"/></svg><svg class="a" style="left:1168px;top:226.3px;" width="7.4" height="4.8" viewBox="0 0 7.4 4.8"><path d="M0.4 0.4L3.7 4.2L7 0.4" fill="none" stroke="#cccccc" stroke-width="1"/></svg><svg class="a" style="left:1184.8px;top:222.2px;" width="14.4" height="13" viewBox="0 0 14.4 13"><path d="M2.3 0.5H13.3L11.9 12.5H0.9Z" fill="none" stroke="#cccccc" stroke-width="1.1" stroke-linejoin="round"/><path d="M3.7 3.2L7 5.9L3.4 8.4" fill="none" stroke="#cccccc" stroke-width="1.2"/><path d="M6.4 9.6H10.2" stroke="#cccccc" stroke-width="1.2"/></svg><div class="tx" style="left:1203.00px;top:224.60px;font-size:10.4px;line-height:10.4px;color:#cccccc;transform:scaleX(0.9374);transform-origin:0 0;">powershell</div><svg class="a" style="left:1260.2px;top:222.4px;" width="12.4" height="12.2" viewBox="0 0 12.4 12.2"><rect x="0.5" y="0.5" width="11.4" height="11.2" rx="1.4" fill="none" stroke="#cccccc" stroke-width="1.05"/><path d="M6.2 1V11.7" stroke="#cccccc" stroke-width="1.05"/></svg><svg class="a" style="left:1283.6px;top:222.2px;" width="10.8" height="12.4" viewBox="0 0 10.8 12.4"><path d="M0 2.3H10.8M3.6 2.3V0.6H7.2V2.3M1.5 2.3L2.2 11.9H8.6L9.3 2.3M4.2 4.5V9.8M6.6 4.5V9.8" fill="none" stroke="#cccccc" stroke-width="1.05"/></svg><div class="a" style="left:1307.0px;top:227.3px;width:2px;height:2px;border-radius:1px;background:#cccccc"></div><div class="a" style="left:1311.8px;top:227.3px;width:2px;height:2px;border-radius:1px;background:#cccccc"></div><div class="a" style="left:1316.6px;top:227.3px;width:2px;height:2px;border-radius:1px;background:#cccccc"></div><svg class="a" style="left:1331.2px;top:224.3px;" width="9.8" height="6.2" viewBox="0 0 9.8 6.2"><path d="M0.4 5.8L4.9 0.9L9.4 5.8" fill="none" stroke="#cccccc" stroke-width="1.1"/></svg><svg class="a" style="left:1354.6px;top:223.7px;" width="9.2" height="9.2" viewBox="0 0 9.2 9.2"><path d="M0.3 0.3L8.9 8.9M8.9 0.3L0.3 8.9" stroke="#cccccc" stroke-width="1.05"/></svg><div class="tx mono" style="left:338.5px;top:258.70px;font-size:12.0px;line-height:12.0px;letter-spacing:-0.700px;color:#cccccc;white-space:pre">seg 9 = NULL</div><div class="tx mono" style="left:338.5px;top:274.50px;font-size:12.0px;line-height:12.0px;letter-spacing:-0.700px;color:#cccccc;white-space:pre">generate all flat image</div><div class="tx mono" style="left:338.5px;top:290.30px;font-size:12.0px;line-height:12.0px;letter-spacing:-0.700px;color:#cccccc;white-space:pre">open tools/uboot.bin</div><div class="tx mono" style="left:338.5px;top:306.10px;font-size:12.0px;line-height:12.0px;letter-spacing:-0.700px;color:#cccccc;white-space:pre">flat_ld = 1983944320</div><div class="tx mono" style="left:338.5px;top:321.90px;font-size:12.0px;line-height:12.0px;letter-spacing:-0.700px;color:#cccccc;white-space:pre">flat_size = 24576</div><div class="tx mono" style="left:338.5px;top:337.70px;font-size:12.0px;line-height:12.0px;letter-spacing:-0.700px;color:#cccccc;white-space:pre">boot_length = 28672</div><div class="tx mono" style="left:338.5px;top:353.50px;font-size:12.0px;line-height:12.0px;letter-spacing:-0.700px;color:#cccccc;white-space:pre">rodata_pos = 28672</div><div class="tx mono" style="left:338.5px;top:369.30px;font-size:12.0px;line-height:12.0px;letter-spacing:-0.700px;color:#cccccc;white-space:pre">section addr origin = a000</div><div class="tx mono" style="left:338.5px;top:385.10px;font-size:12.0px;line-height:12.0px;letter-spacing:-0.700px;color:#cccccc;white-space:pre">section addr origin = 23000</div><div class="tx mono" style="left:338.5px;top:400.90px;font-size:12.0px;line-height:12.0px;letter-spacing:-0.700px;color:#cccccc;white-space:pre">section addr origin = 53000</div><div class="tx mono" style="left:338.5px;top:416.70px;font-size:12.0px;line-height:12.0px;letter-spacing:-0.700px;color:#cccccc;white-space:pre">section addr origin = 200000</div><div class="tx mono" style="left:338.5px;top:432.50px;font-size:12.0px;line-height:12.0px;letter-spacing:-0.700px;color:#cccccc;white-space:pre">seek to 0xe7034</div><div class="tx mono" style="left:338.5px;top:448.30px;font-size:12.0px;line-height:12.0px;letter-spacing:-0.700px;color:#cccccc;white-space:pre">do not found eh_frame</div><div class="tx mono" style="left:338.5px;top:464.10px;font-size:12.0px;line-height:12.0px;letter-spacing:-0.700px;color:#cccccc;white-space:pre">seg_ptr point ot addr 0x33a000</div><div class="tx mono" style="left:338.5px;top:479.90px;font-size:12.0px;line-height:12.0px;letter-spacing:-0.700px;color:#cccccc;white-space:pre">seg_ptr point ot addr 0x33b490</div><div class="tx mono" style="left:338.5px;top:495.70px;font-size:12.0px;line-height:12.0px;letter-spacing:-0.700px;color:#cccccc;white-space:pre">rodata_pos=0x95000</div><div class="tx mono" style="left:338.5px;top:511.50px;font-size:12.0px;line-height:12.0px;letter-spacing:-0.700px;color:#cccccc;white-space:pre">initdata_pos=0x252034</div><div class="tx mono" style="left:338.5px;top:527.30px;font-size:12.0px;line-height:12.0px;letter-spacing:-0.700px;color:#cccccc;white-space:pre">bintools make flat.bin success</div><div class="tx mono" style="left:338.5px;top:543.10px;font-size:12.0px;line-height:12.0px;letter-spacing:-0.700px;color:#cccccc;white-space:pre">cp -f flat.bin rtthread.bin</div><div class="tx mono" style="left:338.5px;top:558.90px;font-size:12.0px;line-height:12.0px;letter-spacing:-0.700px;color:#cccccc;white-space:pre">Error in calling command:cp</div><div class="tx mono" style="left:338.5px;top:574.70px;font-size:12.0px;line-height:12.0px;letter-spacing:-0.700px;color:#cccccc;white-space:pre">Exception: No such file or directory</div><div class="tx mono" style="left:338.5px;top:606.30px;font-size:12.0px;line-height:12.0px;letter-spacing:-0.700px;color:#cccccc;white-space:pre">Please check Toolchains PATH setting.</div><div class="tx mono" style="left:338.5px;top:637.90px;font-size:12.0px;line-height:12.0px;letter-spacing:-0.700px;color:#cccccc;white-space:pre">scons: *** [rtthread.elf] Error 2</div><div class="tx mono" style="left:338.5px;top:653.70px;font-size:12.0px;line-height:12.0px;letter-spacing:-0.700px;color:#cccccc;white-space:pre">scons: building terminated because of errors.</div><div class="tx mono" style="left:338.5px;top:669.50px;font-size:12.0px;line-height:12.0px;letter-spacing:-0.700px;color:#cccccc;white-space:pre">PS E:\work\wiota_ap_customer-master&gt; </div><div class="a" style="left:577.7px;top:666.6px;width:6.5px;height:14.7px;background:#cccccc;"></div><div class="a" style="left:1368px;top:255px;width:1px;height:458px;background:#2b2b2b;"></div><div class="a" style="left:1368px;top:255px;width:12px;height:1px;background:#2b2b2b;"></div><div class="a" style="left:1369px;top:662px;width:11px;height:46.4px;background:#474747;"></div><div class="a" style="left:0px;top:714px;width:31px;height:18px;background:#0078d4;"></div><svg class="a" style="left:11.3px;top:717px;" width="8.6" height="11.4" viewBox="0 0 8.6 11.4"><path d="M8.6 0.3L5.3 4L8.6 7.6" fill="none" stroke="#ffffff" stroke-width="1.15"/><path d="M0.3 3.3L4.5 7.3L0.3 10.9" fill="none" stroke="#ffffff" stroke-width="1.15"/></svg><svg class="a" style="left:38.2px;top:717px;" width="11.7" height="11.7" viewBox="0 0 11.7 11.7"><circle cx="5.85" cy="5.85" r="5.2" fill="none" stroke="#cccccc" stroke-width="1.1"/><path d="M3.7 3.7L8 8M8 3.7L3.7 8" stroke="#cccccc" stroke-width="1.1"/></svg><div class="tx" style="left:52.80px;top:718.19px;font-size:11px;line-height:11px;color:#cccccc;transform:scaleX(0.9974);transform-origin:0 0;">0</div><svg class="a" style="left:62.6px;top:717.3px;" width="11.8" height="10.8" viewBox="0 0 11.8 10.8"><path d="M5.9 0.6L11.3 10.3H0.5Z" fill="none" stroke="#cccccc" stroke-width="1.1" stroke-linejoin="round"/><path d="M5.9 3.8V7.2M5.9 8.1V9.1" stroke="#cccccc" stroke-width="1.1"/></svg><div class="tx" style="left:77.70px;top:718.19px;font-size:11px;line-height:11px;color:#cccccc;transform:scaleX(0.9320);transform-origin:0 0;">0</div><svg class="a" style="left:98.9px;top:717px;" width="10.8" height="11.5" viewBox="0 0 10.8 11.5"><path d="M2.2 1.2A5 5 0 0 0 2.2 8.2M8.6 1.2A5 5 0 0 1 8.6 8.2M3.8 2.7A3 3 0 0 0 3.8 6.7M7 2.7A3 3 0 0 1 7 6.7" fill="none" stroke="#cccccc" stroke-width="1"/><circle cx="5.4" cy="4.7" r="1" fill="#cccccc"/><path d="M5.4 5.5L2.6 11.3M5.4 5.5L8.2 11.3M3.6 9.3H7.2" fill="none" stroke="#cccccc" stroke-width="1"/></svg><div class="tx" style="left:113.00px;top:718.19px;font-size:11px;line-height:11px;color:#cccccc;transform:scaleX(0.9647);transform-origin:0 0;">0</div><div class="tx" style="left:974.50px;top:718.31px;font-size:10.5px;line-height:10.5px;color:#cccccc;">行 13，列 78</div><div class="tx" style="left:1050.90px;top:718.31px;font-size:10.5px;line-height:10.5px;color:#cccccc;">空格: 4</div><div class="tx" style="left:1098.00px;top:718.36px;font-size:10.8px;line-height:10.8px;color:#cccccc;transform:scaleX(0.9217);transform-origin:0 0;">UTF-8</div><div class="tx" style="left:1141.00px;top:718.36px;font-size:10.8px;line-height:10.8px;color:#cccccc;transform:scaleX(0.8192);transform-origin:0 0;">CRLF</div><div class="tx" style="left:1178.40px;top:719.16px;font-size:10.8px;line-height:10.8px;color:#cccccc;transform:scaleX(0.9426);transform-origin:0 0;">{</div><div class="tx" style="left:1184.90px;top:719.16px;font-size:10.8px;line-height:10.8px;color:#cccccc;transform:scaleX(0.9426);transform-origin:0 0;">}</div><div class="tx" style="left:1195.10px;top:718.36px;font-size:10.8px;line-height:10.8px;color:#cccccc;transform:scaleX(0.9726);transform-origin:0 0;">Python</div><div class="tx" style="left:1240.80px;top:718.36px;font-size:10.8px;line-height:10.8px;color:#cccccc;transform:scaleX(0.9610);transform-origin:0 0;">3.11.5 ('base': conda)</div><svg class="a" style="left:1355.4px;top:716.8px;" width="10.4" height="12.4" viewBox="0 0 10.4 12.4"><path d="M5.2 0.6C2.8 0.6 1.8 2.6 1.8 4.6V7.6L0.6 9.6H9.8L8.6 7.6V4.6C8.6 2.6 7.6 0.6 5.2 0.6Z" fill="none" stroke="#cccccc" stroke-width="1.1" stroke-linejoin="round"/><path d="M3.8 10.6A1.5 1.5 0 0 0 6.6 10.6" fill="none" stroke="#cccccc" stroke-width="1.1"/></svg></body></html>
